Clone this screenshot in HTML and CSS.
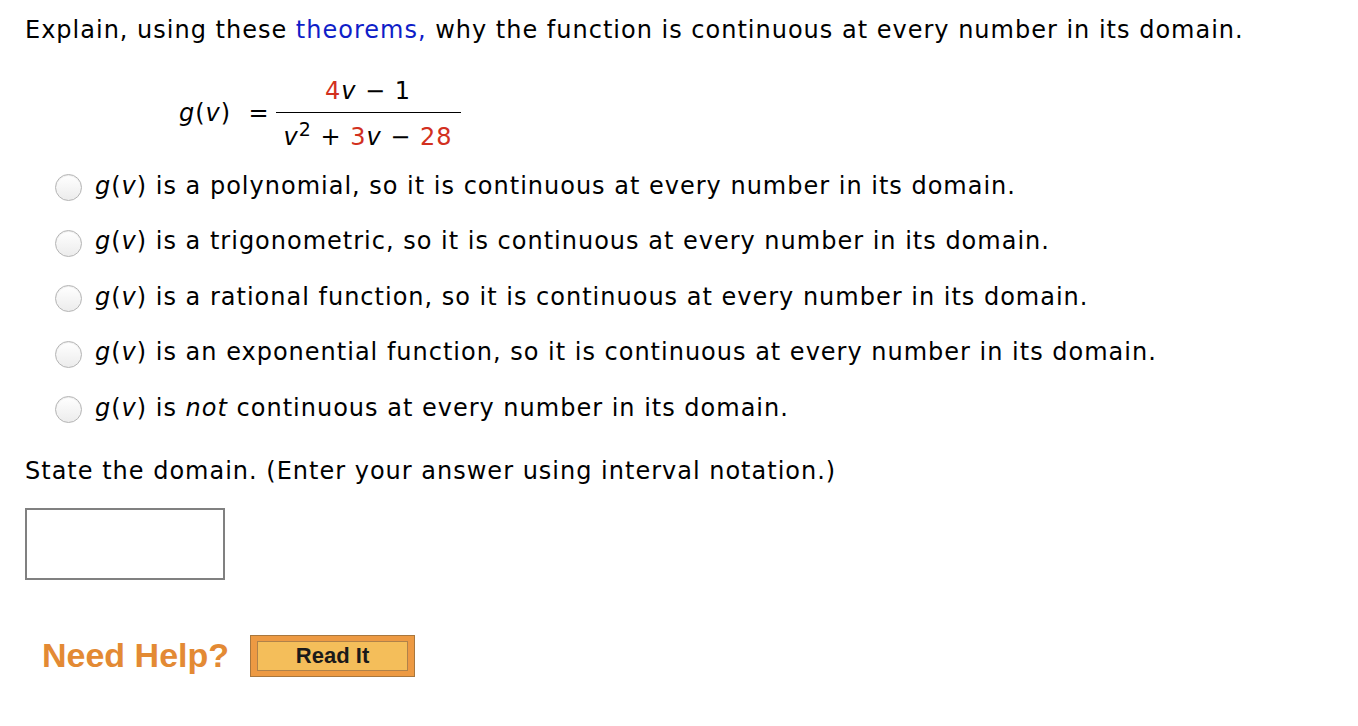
FILE: index.html
```html
<!DOCTYPE html>
<html>
<head>
<meta charset="utf-8">
<link rel="stylesheet" href="styles.css">
</head>
<body>
<div class="page">
  <p class="prompt">Explain, using these <span class="link">theorems,</span> why the function is continuous at every number in its domain.</p>
  <div class="formula">
    <span class="lhs"><i>g</i>(<i>v</i>) &nbsp;=</span>
    <span class="frac">
      <span class="num"><span class="red">4</span><i>v</i> &minus; 1</span>
      <span class="den"><i>v</i><sup>2</sup> + <span class="red">3</span><i>v</i> &minus; <span class="red">28</span></span>
    </span>
  </div>
  <ul class="options">
    <li><span class="radio"></span><span><i>g</i>(<i>v</i>) is a polynomial, so it is continuous at every number in its domain.</span></li>
    <li><span class="radio"></span><span><i>g</i>(<i>v</i>) is a trigonometric, so it is continuous at every number in its domain.</span></li>
    <li><span class="radio"></span><span><i>g</i>(<i>v</i>) is a rational function, so it is continuous at every number in its domain.</span></li>
    <li><span class="radio"></span><span><i>g</i>(<i>v</i>) is an exponential function, so it is continuous at every number in its domain.</span></li>
    <li><span class="radio"></span><span><i>g</i>(<i>v</i>) is <i>not</i> continuous at every number in its domain.</span></li>
  </ul>
  <p class="prompt state">State the domain. (Enter your answer using interval notation.)</p>
  <div class="answer"></div>
  <div class="help">
    <span class="need">Need Help?</span>
    <span class="readit"><span class="readit-inner">Read It</span></span>
  </div>
</div>
</body>
</html>
```
FILE: styles.css
```css
html, body { margin: 0; padding: 0; background: #fff; }
.page {
  font-family: "DejaVu Sans", Verdana, sans-serif;
  font-size: 24px;
  letter-spacing: 1px;
  color: #000;
  padding: 14px 0 0 25px;
}
.prompt { margin: 0; line-height: 32px; }
.link { color: #0f1ec8; }
.red { color: #d2301e; }
.formula {
  display: flex;
  align-items: center;
  margin: 30px 0 0 154px;
}
.lhs { margin-right: 6px; position: relative; top: -2px; }
.frac {
  display: flex;
  flex-direction: column;
  align-items: center;
}
.num {
  line-height: 30px;
  border-bottom: 1.5px solid #000;
  padding: 0 0 6px;
  width: 185px;
  text-align: center;
  text-indent: 0;
}
.den { line-height: 32px; padding-top: 8px; }
.den sup { font-size: 19px; vertical-align: 9px; line-height: 0; }
.options { list-style: none; margin: 5px 0 0 30px; padding: 0; }
.options li {
  display: flex;
  align-items: center;
  height: 55.5px;
}
.radio {
  width: 25px; height: 25px;
  border-radius: 50%;
  border: 1px solid #b4b4b4;
  background: linear-gradient(#fff, #ececec);
  box-shadow: inset 0 1px 1px rgba(0,0,0,0.08);
  margin-right: 13px;
  flex: none;
  position: relative; top: 2px;
}
.state { margin-top: 19px; }
.answer {
  width: 196px; height: 68px;
  border: 2px solid #808080;
  margin-top: 21px;
}
.help {
  display: flex;
  align-items: center;
  margin: 55px 0 0 17px;
}
.need {
  font-family: "Liberation Sans", Arial, sans-serif;
  font-weight: bold;
  font-size: 34px;
  letter-spacing: 0;
  color: #e38a34;
  margin-right: 21px;
}
.readit {
  display: inline-block;
  border: 1px solid #a8773e;
  background: #ed9a43;
  padding: 5px 6px;
  letter-spacing: 0;
}
.readit-inner {
  display: block;
  width: 149px; height: 28px;
  border: 1px solid #b0824a;
  background: #f4be5a;
  font-family: "Liberation Sans", Arial, sans-serif;
  font-weight: bold;
  font-size: 22px;
  line-height: 28px;
  text-align: center;
  color: #1a1a1a;
}
```
